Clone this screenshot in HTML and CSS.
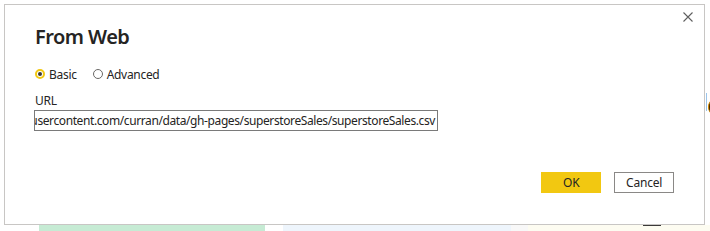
FILE: index.html
```html
<!DOCTYPE html>
<html lang="en">
<head>
<meta charset="utf-8">
<title>From Web</title>
<link rel="stylesheet" href="styles.css">
</head>
<body>
<div class="page">
  <div class="top">
    <div class="dialog">
      <div class="close-row">
        <svg class="close" width="10" height="10" viewBox="0 0 10 10" aria-label="Close">
          <path d="M0.5 0.5 L9.5 9.5 M9.5 0.5 L0.5 9.5" stroke="#5f5f5f" stroke-width="1.1" fill="none"/>
        </svg>
      </div>
      <h1 class="title">From Web</h1>
      <div class="radios">
        <label class="radio"><span class="dot on"></span><span>Basic</span></label>
        <label class="radio"><span class="dot"></span><span>Advanced</span></label>
      </div>
      <div class="label">URL</div>
      <div class="input"><span class="value">https://raw.githubusercontent.com/curran/data/gh-pages/superstoreSales/superstoreSales.csv</span></div>
      <div class="buttons">
        <button class="btn ok">OK</button>
        <button class="btn cancel">Cancel</button>
      </div>
    </div>
    <div class="sliver">
      <span class="blue-line"></span>
      <span class="glyph"></span>
    </div>
  </div>
  <div class="strips">
    <span class="s s-white1"></span>
    <span class="s s-green"></span>
    <span class="s s-white2"></span>
    <span class="s s-blue"></span>
    <span class="s s-gap"></span>
    <span class="s s-cream"><span class="bar"></span></span>
  </div>
</div>
</body>
</html>
```

FILE: styles.css
```css
html, body {
  margin: 0;
  padding: 0;
  background: #ffffff;
}
.page {
  width: 710px;
  height: 231px;
  overflow: hidden;
  display: flex;
  flex-direction: column;
  font-family: "Noto Sans", "Open Sans", sans-serif;
  color: #252423;
}
.top {
  display: flex;
  padding: 4px 0 0 4px;
  height: 221px;
}
.dialog {
  width: 699px;
  height: 219px;
  border: 1px solid #c8c6c4;
  background: #ffffff;
  display: flex;
  flex-direction: column;
  padding: 0 0 0 29px;
  box-sizing: content-box;
}
.close-row {
  display: flex;
  justify-content: flex-end;
  padding: 7px 11px 0 0;
  height: 10px;
}
.close {
  display: block;
}
.title {
  margin: 1px 0 0 1px;
  font-size: 20px;
  font-weight: 600;
  line-height: 28px;
  letter-spacing: -0.55px;
  color: #252423;
}
.radios {
  display: flex;
  gap: 16px;
  margin: 15px 0 0 1px;
  height: 16px;
  align-items: center;
}
.radio {
  display: flex;
  align-items: center;
  gap: 4px;
  font-size: 12px;
  letter-spacing: -0.3px;
}
.dot {
  width: 10px;
  height: 10px;
  box-sizing: border-box;
  border: 1.5px solid #6a6866;
  border-radius: 50%;
  display: flex;
  align-items: center;
  justify-content: center;
}
.dot.on {
  border: 2px solid #f2c811;
}
.dot.on::after {
  content: "";
  width: 4px;
  height: 4px;
  border-radius: 50%;
  background: #3b3a39;
}
.label {
  margin: 11px 0 0 1px;
  font-size: 12px;
  line-height: 16px;
  letter-spacing: -0.2px;
}
.input {
  margin-top: 1px;
  width: 400px;
  height: 19px;
  border: 1px solid #7a7a7a;
  display: flex;
  justify-content: flex-end;
  align-items: center;
  overflow: hidden;
  white-space: nowrap;
  padding-right: 2px;
  font-size: 12px;
  letter-spacing: -0.4px;
}
.value {
  flex: none;
}
.buttons {
  display: flex;
  justify-content: flex-end;
  gap: 13px;
  margin: 41px 30px 0 0;
}
.btn {
  width: 60px;
  height: 21px;
  box-sizing: border-box;
  font-family: "Noto Sans", "Open Sans", sans-serif;
  font-size: 12px;
  letter-spacing: -0.2px;
  color: #252423;
  padding: 0;
  margin: 0;
}
.ok {
  background: #f2c811;
  border: none;
}
.cancel {
  background: #ffffff;
  border: 1px solid #8a8886;
}
.sliver {
  width: 5px;
  display: flex;
  flex-direction: column;
  padding-top: 89px;
  position: relative;
}
.blue-line {
  display: block;
  width: 1px;
  height: 18px;
  background: #9ac4ea;
  margin-left: 1px;
}
.glyph {
  position: absolute;
  left: 3px;
  top: 97px;
  width: 5px;
  height: 10px;
  border-radius: 50%;
  background: #3a2200;
  border: 1px solid #d08a00;
}
.strips {
  display: flex;
  height: 6px;
}
.s {
  display: block;
  height: 100%;
}
.s-white1 { width: 39px; background: #ffffff; }
.s-green { width: 226px; background: #c6ebd4; }
.s-white2 { width: 18px; background: #ffffff; }
.s-blue { width: 228px; background: #eef5fc; }
.s-gap { width: 17px; background: #f8f8f8; }
.s-cream { flex: 1; background: #fdfcf1; display: flex; padding-left: 115px; }
.bar { width: 18px; height: 1px; background: #3b3a39; }
```
